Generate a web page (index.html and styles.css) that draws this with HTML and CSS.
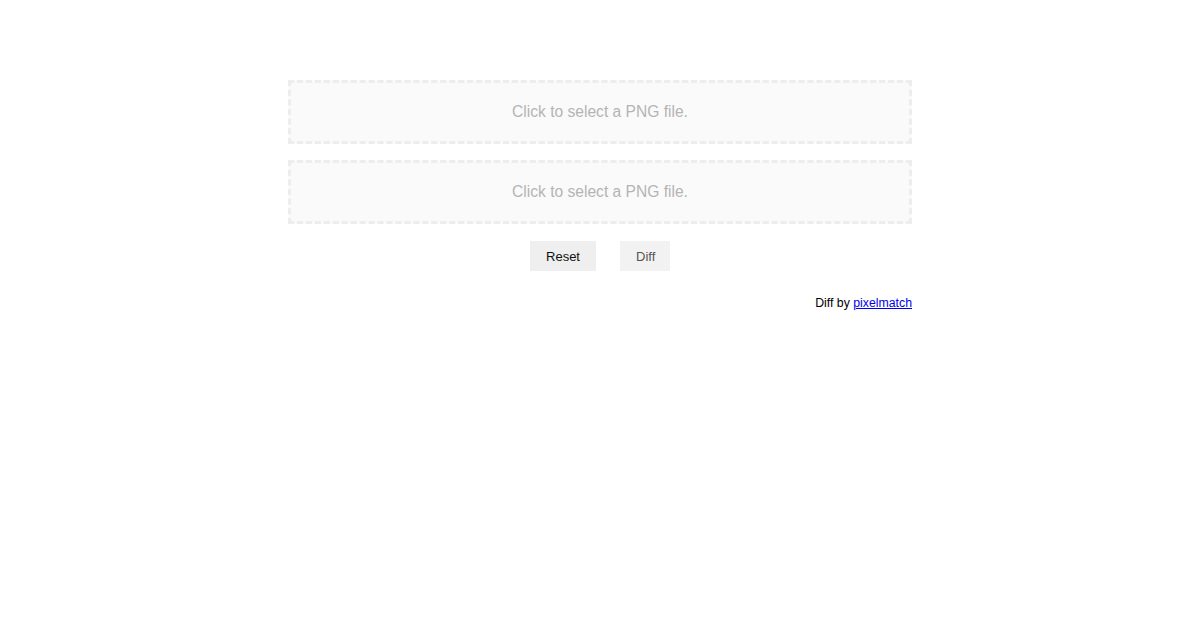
FILE: index.html
```html
<!DOCTYPE html>
<html>
<head>
<meta charset="utf-8">
<link rel="stylesheet" href="styles.css">
</head>
<body>
<main class="wrap">
  <div class="drop">Click to select a PNG file.</div>
  <div class="drop">Click to select a PNG file.</div>
  <div class="actions">
    <button class="btn">Reset</button>
    <button class="btn disabled">Diff</button>
  </div>
  <p class="credit">Diff by <a href="#">pixelmatch</a></p>
</main>
</body>
</html>
```
FILE: styles.css
```css
html, body {
  margin: 0;
  padding: 0;
  background: #fff;
  font-family: "Liberation Sans", Arial, Helvetica, sans-serif;
}
.wrap {
  width: 624px;
  margin: 80px auto 0;
  display: flex;
  flex-direction: column;
}
.drop {
  box-sizing: border-box;
  height: 64px;
  border: 3px dashed #ededed;
  background: #fafafa;
  color: #b4b4b4;
  font-size: 15.6px;
  display: flex;
  align-items: center;
  justify-content: center;
  margin-bottom: 16px;
}
.actions {
  display: flex;
  justify-content: center;
  gap: 24px;
  margin-top: 1px;
}
.btn {
  height: 30px;
  border: none;
  background: #efefef;
  color: #111;
  font-family: "Liberation Sans", Arial, sans-serif;
  font-size: 13px;
  padding: 0 16px;
  width: 66px;
}
.btn.disabled {
  width: 50px;
  color: #555;
  background: #f2f2f2;
}
.credit {
  margin: 25px 0 0;
  text-align: right;
  font-size: 12.3px;
  color: #000;
}
.credit a {
  color: #0000ee;
}
```
